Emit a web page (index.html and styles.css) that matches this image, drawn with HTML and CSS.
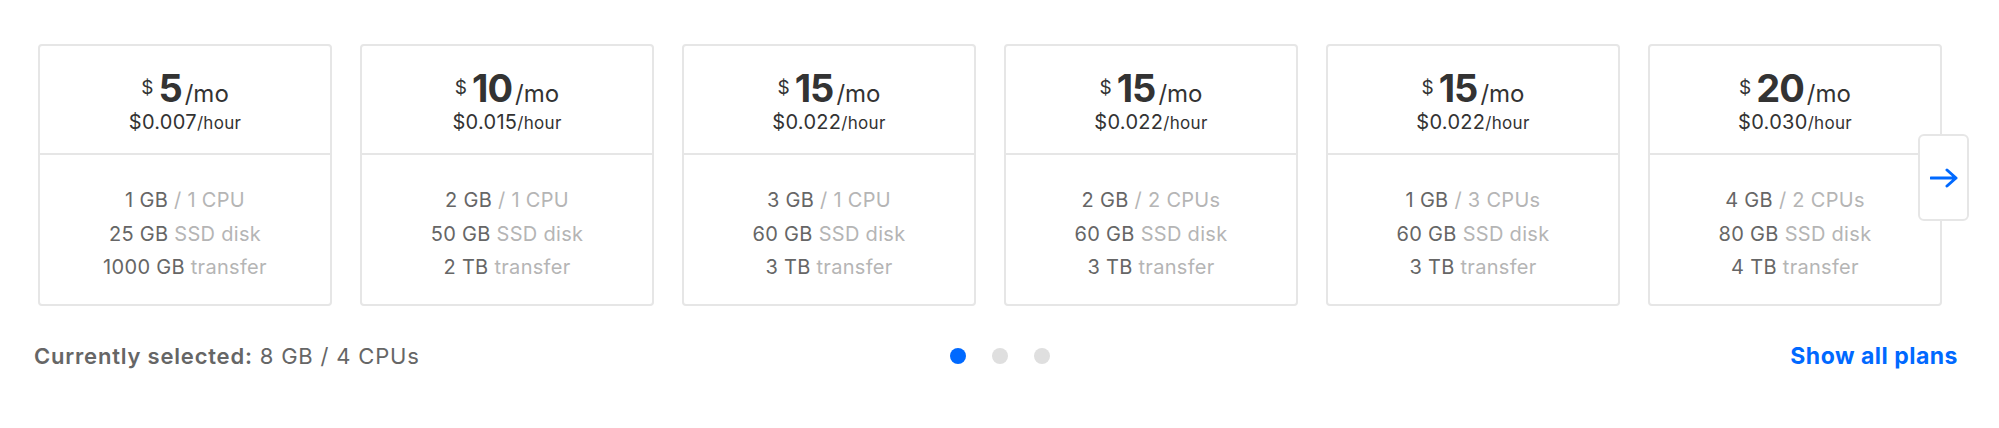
FILE: index.html
```html
<!DOCTYPE html>
<html>
<head>
<meta charset="utf-8">
<link rel="stylesheet" href="styles.css">
</head>
<body>
<div class="page">
  <div class="slider">
    <div class="cards">
      <div class="card">
        <div class="card-head">
          <div class="price"><span class="cur">$</span><span class="amt">5</span><span class="per">/mo</span></div>
          <div class="hourly">$0.007<span class="hr">/hour</span></div>
        </div>
        <div class="card-body">
          <div class="spec"><span class="v">1 GB</span> <span class="l">/ 1 CPU</span></div>
          <div class="spec"><span class="v">25 GB</span> <span class="l">SSD disk</span></div>
          <div class="spec"><span class="v">1000 GB</span> <span class="l">transfer</span></div>
        </div>
      </div>
      <div class="card">
        <div class="card-head">
          <div class="price"><span class="cur">$</span><span class="amt">10</span><span class="per">/mo</span></div>
          <div class="hourly">$0.015<span class="hr">/hour</span></div>
        </div>
        <div class="card-body">
          <div class="spec"><span class="v">2 GB</span> <span class="l">/ 1 CPU</span></div>
          <div class="spec"><span class="v">50 GB</span> <span class="l">SSD disk</span></div>
          <div class="spec"><span class="v">2 TB</span> <span class="l">transfer</span></div>
        </div>
      </div>
      <div class="card">
        <div class="card-head">
          <div class="price"><span class="cur">$</span><span class="amt">15</span><span class="per">/mo</span></div>
          <div class="hourly">$0.022<span class="hr">/hour</span></div>
        </div>
        <div class="card-body">
          <div class="spec"><span class="v">3 GB</span> <span class="l">/ 1 CPU</span></div>
          <div class="spec"><span class="v">60 GB</span> <span class="l">SSD disk</span></div>
          <div class="spec"><span class="v">3 TB</span> <span class="l">transfer</span></div>
        </div>
      </div>
      <div class="card">
        <div class="card-head">
          <div class="price"><span class="cur">$</span><span class="amt">15</span><span class="per">/mo</span></div>
          <div class="hourly">$0.022<span class="hr">/hour</span></div>
        </div>
        <div class="card-body">
          <div class="spec"><span class="v">2 GB</span> <span class="l">/ 2 CPUs</span></div>
          <div class="spec"><span class="v">60 GB</span> <span class="l">SSD disk</span></div>
          <div class="spec"><span class="v">3 TB</span> <span class="l">transfer</span></div>
        </div>
      </div>
      <div class="card">
        <div class="card-head">
          <div class="price"><span class="cur">$</span><span class="amt">15</span><span class="per">/mo</span></div>
          <div class="hourly">$0.022<span class="hr">/hour</span></div>
        </div>
        <div class="card-body">
          <div class="spec"><span class="v">1 GB</span> <span class="l">/ 3 CPUs</span></div>
          <div class="spec"><span class="v">60 GB</span> <span class="l">SSD disk</span></div>
          <div class="spec"><span class="v">3 TB</span> <span class="l">transfer</span></div>
        </div>
      </div>
      <div class="card">
        <div class="card-head">
          <div class="price"><span class="cur">$</span><span class="amt">20</span><span class="per">/mo</span></div>
          <div class="hourly">$0.030<span class="hr">/hour</span></div>
        </div>
        <div class="card-body">
          <div class="spec"><span class="v">4 GB</span> <span class="l">/ 2 CPUs</span></div>
          <div class="spec"><span class="v">80 GB</span> <span class="l">SSD disk</span></div>
          <div class="spec"><span class="v">4 TB</span> <span class="l">transfer</span></div>
        </div>
      </div>
    </div>
    <button class="next" aria-label="Next">
      <svg width="28" height="20" viewBox="0 0 28 20"><path d="M1 10 H26 M17 2 L26 10 L17 18" fill="none" stroke="#0069ff" stroke-width="3" stroke-linecap="round" stroke-linejoin="round"/></svg>
    </button>
  </div>
  <div class="footer">
    <div class="selected"><strong>Currently selected:</strong> 8 GB / 4 CPUs</div>
    <div class="dots"><span class="dot active"></span><span class="dot"></span><span class="dot"></span></div>
    <div class="all"><a class="show-all" href="#">Show all plans</a></div>
  </div>
</div>
</body>
</html>
```

FILE: styles.css
```css
html, body {
  margin: 0;
  padding: 0;
  background: #ffffff;
}
body {
  font-family: Inter, "Liberation Sans", sans-serif;
  color: #333333;
}
.page {
  padding-top: 44px;
}
.slider {
  position: relative;
  padding-left: 38px;
}
.cards {
  display: flex;
  gap: 28px;
}
.card {
  width: 294px;
  box-sizing: border-box;
  border: 2px solid #e6e6e6;
  border-radius: 4px;
  text-align: center;
}
.card-head {
  height: 109px;
  box-sizing: border-box;
  padding-top: 22px;
  border-bottom: 2px solid #e6e6e6;
}
.price {
  display: flex;
  justify-content: center;
  align-items: baseline;
  height: 40px;
  color: #333333;
  white-space: nowrap;
}
.cur {
  align-self: flex-start;
  font-size: 19px;
  line-height: 19px;
  margin-top: 10px;
  margin-right: 5px;
}
.amt {
  font-size: 38px;
  line-height: 40px;
  font-weight: 700;
  letter-spacing: -1px;
}
.per {
  font-size: 24px;
  line-height: 26px;
  margin-left: 3px;
}
.hourly {
  margin-top: 2px;
  font-size: 20px;
  line-height: 25px;
  letter-spacing: 0.3px;
  color: #333333;
}
.hr {
  font-size: 17px;
}
.card-body {
  height: 149px;
  box-sizing: border-box;
  padding-top: 29px;
}
.spec {
  font-size: 20px;
  line-height: 33.5px;
  letter-spacing: 0.3px;
}
.spec .v {
  color: #666666;
}
.spec .l {
  color: #b5b5b5;
}
.next {
  position: absolute;
  left: 1918px;
  top: 90px;
  width: 51px;
  height: 87px;
  box-sizing: border-box;
  padding: 0;
  background: #ffffff;
  border: 2px solid #e6e6e6;
  border-radius: 6px;
  display: flex;
  align-items: center;
  justify-content: center;
  cursor: pointer;
}
.footer {
  display: grid;
  grid-template-columns: 1fr auto 1fr;
  align-items: center;
  padding: 32px 41px 0 34px;
  height: 36px;
}
.selected {
  font-size: 22px;
  letter-spacing: 0.8px;
  color: #666666;
}
.selected strong {
  font-weight: 600;
}
.dots {
  display: flex;
  gap: 26px;
  margin-left: 8px;
}
.dot {
  width: 16px;
  height: 16px;
  border-radius: 50%;
  background: #dfdfdf;
}
.dot.active {
  background: #0069ff;
}
.all {
  text-align: right;
}
.show-all {
  font-size: 23px;
  font-weight: 700;
  letter-spacing: 0.5px;
  color: #0069ff;
  text-decoration: none;
}
```
